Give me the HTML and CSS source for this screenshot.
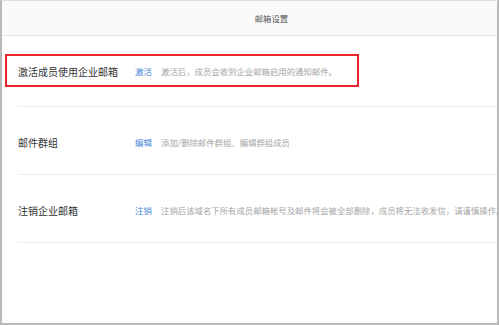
FILE: index.html
```html
<!DOCTYPE html>
<html lang="zh-CN">
<head>
    <meta charset="UTF-8">
    <meta name="viewport" content="width=device-width, initial-scale=1.0">
    <title>邮箱设置</title>
    <link rel="stylesheet" href="styles.css">
</head>
<body>
    <div class="frame">
        <header class="title-bar">
            <h1>邮箱设置</h1>
        </header>
        <div class="settings">
            <div class="row row-first">
                <div class="label">激活成员使用企业邮箱</div>
                <a class="action" href="#">激活</a>
                <span class="desc">激活后，成员会收到企业邮箱启用的通知邮件。</span>
                <div class="highlight"></div>
            </div>
            <div class="row">
                <div class="label">邮件群组</div>
                <a class="action" href="#">编辑</a>
                <span class="desc">添加/删除邮件群组、编辑群组成员</span>
            </div>
            <div class="row">
                <div class="label">注销企业邮箱</div>
                <a class="action" href="#">注销</a>
                <span class="desc">注销后该域名下所有成员邮箱帐号及邮件将会被全部删除，成员将无法收发信，请谨慎操作。</span>
            </div>
        </div>
    </div>
</body>
</html>
```

FILE: styles.css
```css
body {
    margin: 0;
    padding: 0;
    background-color: #fff;
    font-family: "Noto Sans CJK SC", "Noto Sans", sans-serif;
}
.frame {
    box-sizing: border-box;
    width: 499px;
    height: 325px;
    border: 2px solid #b9b9b9;
    border-top: 1px solid #dcdcdc;
    overflow: hidden;
}
.title-bar {
    height: 34px;
    background-color: #fafafa;
    border-bottom: 1px solid #e6e6e6;
    display: flex;
    align-items: center;
    justify-content: center;
    padding-left: 44px;
}
.title-bar h1 {
    margin: 0;
    font-size: 8.4px;
    font-weight: normal;
    color: #555;
}
.settings {
    padding-left: 16px;
}
.row {
    position: relative;
    display: flex;
    align-items: center;
    box-sizing: border-box;
    height: 68px;
    padding-top: 3px;
    border-bottom: 1px solid #ececec;
    white-space: nowrap;
}
.row-first {
    height: 71px;
    padding-top: 0;
}
.label {
    flex-shrink: 0;
    width: 117px;
    font-size: 10px;
    color: #333;
}
.action {
    flex-shrink: 0;
    font-size: 8.5px;
    color: #4b87d9;
    text-decoration: none;
    margin-right: 9px;
}
.desc {
    font-size: 8.4px;
    color: #a5a5a5;
}
.highlight {
    position: absolute;
    left: -13px;
    top: 18px;
    width: 350px;
    height: 29px;
    border: 2px solid #e8232b;
}
```
